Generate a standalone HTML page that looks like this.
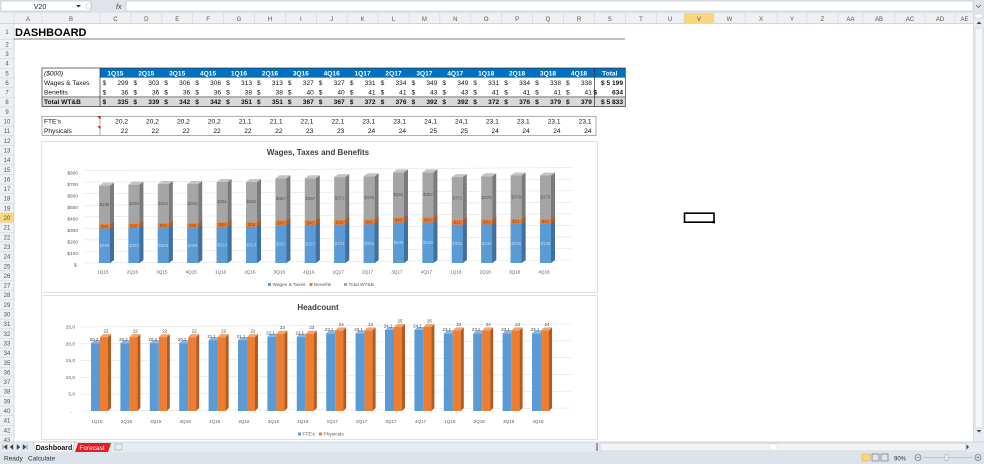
<!DOCTYPE html>
<html><head><meta charset="utf-8"><style>
html,body{margin:0;padding:0;background:#fff;}
svg{display:block;font-family:"Liberation Sans",Arial,sans-serif;}
.h{font-size:6px;fill:#555;text-anchor:middle}
.t{font-size:6.6px;fill:#111}
.b{font-weight:bold}
.e{text-anchor:end}
.m{text-anchor:middle}
.ax{font-size:4.8px;fill:#595959;text-anchor:end}
.cat{font-size:4.6px;fill:#595959;text-anchor:middle}
.lg{font-size:4.8px;fill:#595959}
.gl{font-size:4.4px;text-anchor:middle}
.f{fill:#a5a5a5}.fs{fill:#7b7b7b}.ft{fill:#c4c4c4}
.o{fill:#ed7d31}.os{fill:#b05b22}.ot{fill:#f4a36e}
.u{fill:#5b9bd5}.us{fill:#3f70a0}.ut{fill:#8cb9e3}
</style></head><body>
<svg width="984" height="464" viewBox="0 0 984 464" xmlns="http://www.w3.org/2000/svg">
<defs>
<pattern id="rl" x="0" y="39" width="14" height="9.65" patternUnits="userSpaceOnUse"><rect width="14" height="9.65" fill="#eef0f3"/><line x1="0" y1="0.3" x2="14" y2="0.3" stroke="#d3d7dc" stroke-width="0.6"/></pattern>
</defs>
<!-- formula bar -->
<rect x="0" y="0" width="984" height="13" fill="#dfe4ea"/>
<rect x="1" y="1" width="90" height="10" fill="#fff" stroke="#b9c0c8" stroke-width="0.6"/>
<text x="40" y="9" font-size="7" fill="#222" class="m">V20</text>
<path d="M76 5 l2.5 2.5 l2.5 -2.5z" fill="#333"/>
<circle cx="89" cy="6" r="3" fill="none" stroke="#c4cad0" stroke-width="0.6"/>
<text x="116" y="9" font-size="7" font-style="italic" fill="#444">fx</text>
<rect x="126" y="1" width="847" height="10" fill="#fff" stroke="#b9c0c8" stroke-width="0.6"/>
<path d="M976 5 l2.5 2.5 l2.5 -2.5" stroke="#555" fill="none" stroke-width="0.7"/>
<!-- column header -->
<rect x="0" y="13" width="974" height="11" fill="#eef0f3"/>
<line x1="0" y1="23.7" x2="974" y2="23.7" stroke="#c0c5cc" stroke-width="0.6"/>
<rect x="684" y="13" width="30" height="11" fill="#f8d77c"/>
<g stroke="#d0d4da" stroke-width="0.6">
<line x1="14" y1="13" x2="14" y2="24"/><line x1="42" y1="13" x2="42" y2="24"/><line x1="100" y1="13" x2="100" y2="24"/><line x1="130.9" y1="13" x2="130.9" y2="24"/><line x1="161.8" y1="13" x2="161.8" y2="24"/><line x1="192.7" y1="13" x2="192.7" y2="24"/><line x1="223.6" y1="13" x2="223.6" y2="24"/><line x1="254.5" y1="13" x2="254.5" y2="24"/><line x1="285.4" y1="13" x2="285.4" y2="24"/><line x1="316.3" y1="13" x2="316.3" y2="24"/><line x1="347.2" y1="13" x2="347.2" y2="24"/><line x1="378.1" y1="13" x2="378.1" y2="24"/><line x1="409" y1="13" x2="409" y2="24"/><line x1="439.9" y1="13" x2="439.9" y2="24"/><line x1="470.8" y1="13" x2="470.8" y2="24"/><line x1="501.7" y1="13" x2="501.7" y2="24"/><line x1="532.6" y1="13" x2="532.6" y2="24"/><line x1="563.5" y1="13" x2="563.5" y2="24"/><line x1="594.4" y1="13" x2="594.4" y2="24"/><line x1="625.3" y1="13" x2="625.3" y2="24"/><line x1="656.5" y1="13" x2="656.5" y2="24"/><line x1="684" y1="13" x2="684" y2="24"/><line x1="714" y1="13" x2="714" y2="24"/><line x1="745" y1="13" x2="745" y2="24"/><line x1="777" y1="13" x2="777" y2="24"/><line x1="807" y1="13" x2="807" y2="24"/><line x1="838" y1="13" x2="838" y2="24"/><line x1="863" y1="13" x2="863" y2="24"/><line x1="895" y1="13" x2="895" y2="24"/><line x1="925" y1="13" x2="925" y2="24"/><line x1="955" y1="13" x2="955" y2="24"/>
</g>
<text y="21" class="h"><tspan x="28">A</tspan><tspan x="71">B</tspan><tspan x="115.4">C</tspan><tspan x="146.3">D</tspan><tspan x="177.2">E</tspan><tspan x="208.1">F</tspan><tspan x="239">G</tspan><tspan x="270">H</tspan><tspan x="300.8">I</tspan><tspan x="331.7">J</tspan><tspan x="362.6">K</tspan><tspan x="393.5">L</tspan><tspan x="424.4">M</tspan><tspan x="455.3">N</tspan><tspan x="486.2">O</tspan><tspan x="517.1">P</tspan><tspan x="548">Q</tspan><tspan x="579">R</tspan><tspan x="609.8">S</tspan><tspan x="640.9">T</tspan><tspan x="670.2">U</tspan><tspan x="699">V</tspan><tspan x="729.5">W</tspan><tspan x="761">X</tspan><tspan x="792">Y</tspan><tspan x="822.5">Z</tspan><tspan x="850.5">AA</tspan><tspan x="879">AB</tspan><tspan x="910">AC</tspan><tspan x="940">AD</tspan><tspan x="964.5">AE</tspan></text>
<!-- row header -->
<rect x="0" y="24" width="14" height="418" fill="url(#rl)"/>
<rect x="0" y="24" width="14" height="15" fill="#eef0f3"/>
<rect x="0" y="212.7" width="14" height="9.65" fill="#f8d77c"/>
<line x1="14" y1="24" x2="14" y2="442" stroke="#c0c5cc" stroke-width="0.6"/>
<text class="h" x="7"><tspan y="34">1</tspan><tspan x="7" y="46.3">2</tspan><tspan x="7" y="55.95">3</tspan><tspan x="7" y="65.6">4</tspan><tspan x="7" y="75.25">5</tspan><tspan x="7" y="84.9">6</tspan><tspan x="7" y="94.55">7</tspan><tspan x="7" y="104.2">8</tspan><tspan x="7" y="113.85">9</tspan><tspan x="7" y="123.5">10</tspan><tspan x="7" y="133.15">11</tspan><tspan x="7" y="142.8">12</tspan><tspan x="7" y="152.45">13</tspan><tspan x="7" y="162.1">14</tspan><tspan x="7" y="171.75">15</tspan><tspan x="7" y="181.4">16</tspan><tspan x="7" y="191.05">17</tspan><tspan x="7" y="200.7">18</tspan><tspan x="7" y="210.35">19</tspan><tspan x="7" y="220">20</tspan><tspan x="7" y="229.65">21</tspan><tspan x="7" y="239.3">22</tspan><tspan x="7" y="248.95">23</tspan><tspan x="7" y="258.6">24</tspan><tspan x="7" y="268.25">25</tspan><tspan x="7" y="277.9">26</tspan><tspan x="7" y="287.55">27</tspan><tspan x="7" y="297.2">28</tspan><tspan x="7" y="306.85">29</tspan><tspan x="7" y="316.5">30</tspan><tspan x="7" y="326.15">31</tspan><tspan x="7" y="335.8">32</tspan><tspan x="7" y="345.45">33</tspan><tspan x="7" y="355.1">34</tspan><tspan x="7" y="364.75">35</tspan><tspan x="7" y="374.4">36</tspan><tspan x="7" y="384.05">37</tspan><tspan x="7" y="393.7">38</tspan><tspan x="7" y="403.35">39</tspan><tspan x="7" y="413">40</tspan><tspan x="7" y="422.65">41</tspan><tspan x="7" y="432.3">42</tspan><tspan x="7" y="441.95">43</tspan></text>

<!-- title -->
<text x="15" y="36" font-size="11" font-weight="bold" fill="#000">DASHBOARD</text>
<line x1="14" y1="39" x2="625" y2="39" stroke="#555" stroke-width="0.8"/>

<!-- table -->
<rect x="100" y="68" width="525.3" height="9.65" fill="#0070c0"/>
<rect x="42" y="96.95" width="583.3" height="9.65" fill="#d9d9d9"/>
<rect x="42" y="68" width="583.3" height="38.6" fill="none" stroke="#333" stroke-width="0.7"/>
<line x1="100" y1="68" x2="100" y2="106.6" stroke="#333" stroke-width="0.7"/>
<line x1="594.4" y1="68" x2="594.4" y2="106.6" stroke="#333" stroke-width="0.7"/>
<line x1="42" y1="96.95" x2="625.3" y2="96.95" stroke="#333" stroke-width="0.7"/>
<text y="75.25" class="t" font-style="italic"><tspan x="44">($000)</tspan></text>
<text y="75.25" class="t b m" fill="#fff" style="fill:#fff"><tspan x="115.4">1Q15</tspan><tspan x="146.3">2Q15</tspan><tspan x="177.2">3Q15</tspan><tspan x="208.1">4Q15</tspan><tspan x="239">1Q16</tspan><tspan x="270">2Q16</tspan><tspan x="300.8">3Q16</tspan><tspan x="331.7">4Q16</tspan><tspan x="362.6">1Q17</tspan><tspan x="393.5">2Q17</tspan><tspan x="424.4">3Q17</tspan><tspan x="455.3">4Q17</tspan><tspan x="486.2">1Q18</tspan><tspan x="517.1">2Q18</tspan><tspan x="548">3Q18</tspan><tspan x="579">4Q18</tspan><tspan x="609.8">Total</tspan></text>
<text class="t"><tspan x="44" y="84.9">Wages &amp; Taxes</tspan><tspan x="44" y="94.55">Benefits</tspan><tspan x="44" y="104.2" font-weight="bold">Total WT&amp;B</tspan></text>
<text class="t"><tspan x="102.5" y="84.9">$</tspan><tspan x="133.4">$</tspan><tspan x="164.3">$</tspan><tspan x="195.2">$</tspan><tspan x="226.1">$</tspan><tspan x="257">$</tspan><tspan x="287.9">$</tspan><tspan x="318.8">$</tspan><tspan x="349.7">$</tspan><tspan x="380.6">$</tspan><tspan x="411.5">$</tspan><tspan x="442.4">$</tspan><tspan x="473.3">$</tspan><tspan x="504.2">$</tspan><tspan x="535.1">$</tspan><tspan x="566">$</tspan></text>
<text class="t"><tspan x="102.5" y="94.55">$</tspan><tspan x="133.4">$</tspan><tspan x="164.3">$</tspan><tspan x="195.2">$</tspan><tspan x="226.1">$</tspan><tspan x="257">$</tspan><tspan x="287.9">$</tspan><tspan x="318.8">$</tspan><tspan x="349.7">$</tspan><tspan x="380.6">$</tspan><tspan x="411.5">$</tspan><tspan x="442.4">$</tspan><tspan x="473.3">$</tspan><tspan x="504.2">$</tspan><tspan x="535.1">$</tspan><tspan x="566">$</tspan></text>
<text class="t b"><tspan x="102.5" y="104.2">$</tspan><tspan x="133.4">$</tspan><tspan x="164.3">$</tspan><tspan x="195.2">$</tspan><tspan x="226.1">$</tspan><tspan x="257">$</tspan><tspan x="287.9">$</tspan><tspan x="318.8">$</tspan><tspan x="349.7">$</tspan><tspan x="380.6">$</tspan><tspan x="411.5">$</tspan><tspan x="442.4">$</tspan><tspan x="473.3">$</tspan><tspan x="504.2">$</tspan><tspan x="535.1">$</tspan><tspan x="566">$</tspan></text>
<g class="t e" style="text-anchor:end">
<text y="84.9" class="t e"><tspan x="128.4">299</tspan><tspan x="159.3">303</tspan><tspan x="190.2">306</tspan><tspan x="221.1">306</tspan><tspan x="252">313</tspan><tspan x="282.9">313</tspan><tspan x="313.8">327</tspan><tspan x="344.7">327</tspan><tspan x="375.6">331</tspan><tspan x="406.5">334</tspan><tspan x="437.4">349</tspan><tspan x="468.3">349</tspan><tspan x="499.2">331</tspan><tspan x="530.1">334</tspan><tspan x="561">338</tspan><tspan x="591.9">338</tspan><tspan x="623" font-weight="bold">$ 5 199</tspan></text>
<text y="94.55" class="t e"><tspan x="128.4">36</tspan><tspan x="159.3">36</tspan><tspan x="190.2">36</tspan><tspan x="221.1">36</tspan><tspan x="252">38</tspan><tspan x="282.9">38</tspan><tspan x="313.8">40</tspan><tspan x="344.7">40</tspan><tspan x="375.6">41</tspan><tspan x="406.5">41</tspan><tspan x="437.4">43</tspan><tspan x="468.3">43</tspan><tspan x="499.2">41</tspan><tspan x="530.1">41</tspan><tspan x="561">41</tspan><tspan x="591.9">41</tspan><tspan x="623" font-weight="bold">634</tspan></text>
<text y="94.55" class="t b"><tspan x="597">$</tspan></text>
<text y="104.2" class="t e b"><tspan x="128.4">335</tspan><tspan x="159.3">339</tspan><tspan x="190.2">342</tspan><tspan x="221.1">342</tspan><tspan x="252">351</tspan><tspan x="282.9">351</tspan><tspan x="313.8">367</tspan><tspan x="344.7">367</tspan><tspan x="375.6">372</tspan><tspan x="406.5">376</tspan><tspan x="437.4">392</tspan><tspan x="468.3">392</tspan><tspan x="499.2">372</tspan><tspan x="530.1">376</tspan><tspan x="561">379</tspan><tspan x="591.9">379</tspan><tspan x="623">$ 5 833</tspan></text>
<text y="123.5" class="t e"><tspan x="128">20,2</tspan><tspan x="158.9">20,2</tspan><tspan x="189.8">20,2</tspan><tspan x="220.7">20,2</tspan><tspan x="251.6">21,1</tspan><tspan x="282.5">21,1</tspan><tspan x="313.4">22,1</tspan><tspan x="344.3">22,1</tspan><tspan x="375.2">23,1</tspan><tspan x="406.1">23,1</tspan><tspan x="437">24,1</tspan><tspan x="467.9">24,1</tspan><tspan x="498.8">23,1</tspan><tspan x="529.7">23,1</tspan><tspan x="560.6">23,1</tspan><tspan x="591.5">23,1</tspan></text>
<text y="133.15" class="t e"><tspan x="128">22</tspan><tspan x="158.9">22</tspan><tspan x="189.8">22</tspan><tspan x="220.7">22</tspan><tspan x="251.6">22</tspan><tspan x="282.5">22</tspan><tspan x="313.4">23</tspan><tspan x="344.3">23</tspan><tspan x="375.2">24</tspan><tspan x="406.1">24</tspan><tspan x="437">25</tspan><tspan x="467.9">25</tspan><tspan x="498.8">24</tspan><tspan x="529.7">24</tspan><tspan x="560.6">24</tspan><tspan x="591.5">24</tspan></text>
</g>
<rect x="42" y="116.25" width="554" height="19.3" fill="none" stroke="#777" stroke-width="0.6"/>
<line x1="100" y1="116.25" x2="100" y2="135.55" stroke="#777" stroke-width="0.6"/>
<text class="t"><tspan x="44" y="123.5">FTE's</tspan><tspan x="44" y="133.15">Physicals</tspan></text>
<path d="M97.5 116.5 h3 v3z M97.5 126.2 h3 v3z" fill="#c00000"/>

<!-- chart 1 -->
<rect x="41.5" y="141.5" width="556" height="151" fill="#fff" stroke="#d9d9d9" stroke-width="0.8"/>
<text x="318" y="155" font-size="8" font-weight="bold" fill="#404040" class="m">Wages, Taxes and Benefits</text>
<g stroke="#e3e3e3" stroke-width="0.6">
<line x1="84" y1="170.6" x2="572" y2="167.6"/><line x1="84" y1="182.2" x2="572" y2="179.2"/><line x1="84" y1="193.7" x2="572" y2="190.7"/><line x1="84" y1="205.3" x2="572" y2="202.3"/><line x1="84" y1="216.8" x2="572" y2="213.8"/><line x1="84" y1="228.4" x2="572" y2="225.4"/><line x1="84" y1="239.9" x2="572" y2="236.9"/><line x1="84" y1="251.5" x2="572" y2="248.5"/><line x1="84" y1="263" x2="572" y2="260"/>
</g>
<text class="ax"><tspan x="78" y="174.5">$800</tspan><tspan x="78" y="186">$700</tspan><tspan x="78" y="197.5">$600</tspan><tspan x="78" y="209">$500</tspan><tspan x="78" y="220.5">$400</tspan><tspan x="78" y="232">$300</tspan><tspan x="78" y="243.5">$200</tspan><tspan x="78" y="255">$100</tspan><tspan x="78" y="266.5">$-</tspan></text>

<g transform="translate(99 0)"><rect class="f" y="185.6" width="11" height="77.4"/><polygon class="fs" points="11,185.6 15,182.6 15,260 11,263"/><polygon class="ft" points="0,185.6 4,182.6 15,182.6 11,185.6"/><rect class="o" y="224.3" width="11" height="4.2"/><polygon class="os" points="11,224.3 15,221.3 15,225.5 11,228.5"/><rect class="u" y="228.5" width="11" height="34.5"/><polygon class="us" points="11,228.5 15,225.5 15,260 11,263"/><text class="gl" x="5.5" y="206" fill="#595959">$335</text><text class="gl" x="5.5" y="228" fill="#9c4a14">$36</text><text class="gl" x="5.5" y="247" fill="#bcd6ef">$299</text></g>
<g transform="translate(128.4 0)"><rect class="f" y="184.6" width="11" height="78.4"/><polygon class="fs" points="11,184.6 15,181.6 15,260 11,263"/><polygon class="ft" points="0,184.6 4,181.6 15,181.6 11,184.6"/><rect class="o" y="223.8" width="11" height="4.2"/><polygon class="os" points="11,223.8 15,220.8 15,225 11,228"/><rect class="u" y="228" width="11" height="35"/><polygon class="us" points="11,228 15,225 15,260 11,263"/><text class="gl" x="5.5" y="205" fill="#595959">$339</text><text class="gl" x="5.5" y="227.5" fill="#9c4a14">$36</text><text class="gl" x="5.5" y="247" fill="#bcd6ef">$303</text></g>
<g transform="translate(157.8 0)"><rect class="f" y="184" width="11" height="79"/><polygon class="fs" points="11,184 15,181 15,260 11,263"/><polygon class="ft" points="0,184 4,181 15,181 11,184"/><rect class="o" y="223.5" width="11" height="4.2"/><polygon class="os" points="11,223.5 15,220.5 15,224.7 11,227.7"/><rect class="u" y="227.7" width="11" height="35.3"/><polygon class="us" points="11,227.7 15,224.7 15,260 11,263"/><text class="gl" x="5.5" y="205" fill="#595959">$342</text><text class="gl" x="5.5" y="227" fill="#9c4a14">$36</text><text class="gl" x="5.5" y="247" fill="#bcd6ef">$306</text></g>
<g transform="translate(187.2 0)"><rect class="f" y="184" width="11" height="79"/><polygon class="fs" points="11,184 15,181 15,260 11,263"/><polygon class="ft" points="0,184 4,181 15,181 11,184"/><rect class="o" y="223.5" width="11" height="4.2"/><polygon class="os" points="11,223.5 15,220.5 15,224.7 11,227.7"/><rect class="u" y="227.7" width="11" height="35.3"/><polygon class="us" points="11,227.7 15,224.7 15,260 11,263"/><text class="gl" x="5.5" y="205" fill="#595959">$342</text><text class="gl" x="5.5" y="227" fill="#9c4a14">$36</text><text class="gl" x="5.5" y="247" fill="#bcd6ef">$306</text></g>
<g transform="translate(216.6 0)"><rect class="f" y="182" width="11" height="81"/><polygon class="fs" points="11,182 15,179 15,260 11,263"/><polygon class="ft" points="0,182 4,179 15,179 11,182"/><rect class="o" y="222.5" width="11" height="4.4"/><polygon class="os" points="11,222.5 15,219.5 15,223.9 11,226.9"/><rect class="u" y="226.9" width="11" height="36.1"/><polygon class="us" points="11,226.9 15,223.9 15,260 11,263"/><text class="gl" x="5.5" y="203" fill="#595959">$351</text><text class="gl" x="5.5" y="226" fill="#9c4a14">$38</text><text class="gl" x="5.5" y="246.5" fill="#bcd6ef">$313</text></g>
<g transform="translate(246 0)"><rect class="f" y="182" width="11" height="81"/><polygon class="fs" points="11,182 15,179 15,260 11,263"/><polygon class="ft" points="0,182 4,179 15,179 11,182"/><rect class="o" y="222.5" width="11" height="4.4"/><polygon class="os" points="11,222.5 15,219.5 15,223.9 11,226.9"/><rect class="u" y="226.9" width="11" height="36.1"/><polygon class="us" points="11,226.9 15,223.9 15,260 11,263"/><text class="gl" x="5.5" y="203" fill="#595959">$351</text><text class="gl" x="5.5" y="226" fill="#9c4a14">$38</text><text class="gl" x="5.5" y="246.5" fill="#bcd6ef">$313</text></g>
<g transform="translate(275.4 0)"><rect class="f" y="178.2" width="11" height="84.8"/><polygon class="fs" points="11,178.2 15,175.2 15,260 11,263"/><polygon class="ft" points="0,178.2 4,175.2 15,175.2 11,178.2"/><rect class="o" y="220.6" width="11" height="4.6"/><polygon class="os" points="11,220.6 15,217.6 15,222.2 11,225.2"/><rect class="u" y="225.2" width="11" height="37.8"/><polygon class="us" points="11,225.2 15,222.2 15,260 11,263"/><text class="gl" x="5.5" y="200" fill="#595959">$367</text><text class="gl" x="5.5" y="224.5" fill="#9c4a14">$40</text><text class="gl" x="5.5" y="245.5" fill="#bcd6ef">$327</text></g>
<g transform="translate(304.8 0)"><rect class="f" y="178.2" width="11" height="84.8"/><polygon class="fs" points="11,178.2 15,175.2 15,260 11,263"/><polygon class="ft" points="0,178.2 4,175.2 15,175.2 11,178.2"/><rect class="o" y="220.6" width="11" height="4.6"/><polygon class="os" points="11,220.6 15,217.6 15,222.2 11,225.2"/><rect class="u" y="225.2" width="11" height="37.8"/><polygon class="us" points="11,225.2 15,222.2 15,260 11,263"/><text class="gl" x="5.5" y="200" fill="#595959">$367</text><text class="gl" x="5.5" y="224.5" fill="#9c4a14">$40</text><text class="gl" x="5.5" y="245.5" fill="#bcd6ef">$327</text></g>
<g transform="translate(334.2 0)"><rect class="f" y="177.1" width="11" height="85.9"/><polygon class="fs" points="11,177.1 15,174.1 15,260 11,263"/><polygon class="ft" points="0,177.1 4,174.1 15,174.1 11,177.1"/><rect class="o" y="220.1" width="11" height="4.7"/><polygon class="os" points="11,220.1 15,217.1 15,221.8 11,224.8"/><rect class="u" y="224.8" width="11" height="38.2"/><polygon class="us" points="11,224.8 15,221.8 15,260 11,263"/><text class="gl" x="5.5" y="199.5" fill="#595959">$372</text><text class="gl" x="5.5" y="224" fill="#9c4a14">$41</text><text class="gl" x="5.5" y="245" fill="#bcd6ef">$331</text></g>
<g transform="translate(363.6 0)"><rect class="f" y="176.3" width="11" height="86.7"/><polygon class="fs" points="11,176.3 15,173.3 15,260 11,263"/><polygon class="ft" points="0,176.3 4,173.3 15,173.3 11,176.3"/><rect class="o" y="219.7" width="11" height="4.7"/><polygon class="os" points="11,219.7 15,216.7 15,221.4 11,224.4"/><rect class="u" y="224.4" width="11" height="38.6"/><polygon class="us" points="11,224.4 15,221.4 15,260 11,263"/><text class="gl" x="5.5" y="199" fill="#595959">$376</text><text class="gl" x="5.5" y="223.5" fill="#9c4a14">$41</text><text class="gl" x="5.5" y="245" fill="#bcd6ef">$334</text></g>
<g transform="translate(393 0)"><rect class="f" y="172.4" width="11" height="90.6"/><polygon class="fs" points="11,172.4 15,169.4 15,260 11,263"/><polygon class="ft" points="0,172.4 4,169.4 15,169.4 11,172.4"/><rect class="o" y="217.7" width="11" height="5"/><polygon class="os" points="11,217.7 15,214.7 15,219.7 11,222.7"/><rect class="u" y="222.7" width="11" height="40.3"/><polygon class="us" points="11,222.7 15,219.7 15,260 11,263"/><text class="gl" x="5.5" y="196" fill="#595959">$392</text><text class="gl" x="5.5" y="221.5" fill="#9c4a14">$43</text><text class="gl" x="5.5" y="244" fill="#bcd6ef">$349</text></g>
<g transform="translate(422.4 0)"><rect class="f" y="172.4" width="11" height="90.6"/><polygon class="fs" points="11,172.4 15,169.4 15,260 11,263"/><polygon class="ft" points="0,172.4 4,169.4 15,169.4 11,172.4"/><rect class="o" y="217.7" width="11" height="5"/><polygon class="os" points="11,217.7 15,214.7 15,219.7 11,222.7"/><rect class="u" y="222.7" width="11" height="40.3"/><polygon class="us" points="11,222.7 15,219.7 15,260 11,263"/><text class="gl" x="5.5" y="196" fill="#595959">$392</text><text class="gl" x="5.5" y="221.5" fill="#9c4a14">$43</text><text class="gl" x="5.5" y="244" fill="#bcd6ef">$349</text></g>
<g transform="translate(451.8 0)"><rect class="f" y="177.1" width="11" height="85.9"/><polygon class="fs" points="11,177.1 15,174.1 15,260 11,263"/><polygon class="ft" points="0,177.1 4,174.1 15,174.1 11,177.1"/><rect class="o" y="220.1" width="11" height="4.7"/><polygon class="os" points="11,220.1 15,217.1 15,221.8 11,224.8"/><rect class="u" y="224.8" width="11" height="38.2"/><polygon class="us" points="11,224.8 15,221.8 15,260 11,263"/><text class="gl" x="5.5" y="199.5" fill="#595959">$372</text><text class="gl" x="5.5" y="224" fill="#9c4a14">$41</text><text class="gl" x="5.5" y="245" fill="#bcd6ef">$331</text></g>
<g transform="translate(481.2 0)"><rect class="f" y="176.3" width="11" height="86.7"/><polygon class="fs" points="11,176.3 15,173.3 15,260 11,263"/><polygon class="ft" points="0,176.3 4,173.3 15,173.3 11,176.3"/><rect class="o" y="219.7" width="11" height="4.7"/><polygon class="os" points="11,219.7 15,216.7 15,221.4 11,224.4"/><rect class="u" y="224.4" width="11" height="38.6"/><polygon class="us" points="11,224.4 15,221.4 15,260 11,263"/><text class="gl" x="5.5" y="199" fill="#595959">$376</text><text class="gl" x="5.5" y="223.5" fill="#9c4a14">$41</text><text class="gl" x="5.5" y="245" fill="#bcd6ef">$334</text></g>
<g transform="translate(510.6 0)"><rect class="f" y="175.5" width="11" height="87.5"/><polygon class="fs" points="11,175.5 15,172.5 15,260 11,263"/><polygon class="ft" points="0,175.5 4,172.5 15,172.5 11,175.5"/><rect class="o" y="219.3" width="11" height="4.7"/><polygon class="os" points="11,219.3 15,216.3 15,221 11,224"/><rect class="u" y="224" width="11" height="39"/><polygon class="us" points="11,224 15,221 15,260 11,263"/><text class="gl" x="5.5" y="198.5" fill="#595959">$379</text><text class="gl" x="5.5" y="223" fill="#9c4a14">$41</text><text class="gl" x="5.5" y="245" fill="#bcd6ef">$338</text></g>
<g transform="translate(540 0)"><rect class="f" y="175.5" width="11" height="87.5"/><polygon class="fs" points="11,175.5 15,172.5 15,260 11,263"/><polygon class="ft" points="0,175.5 4,172.5 15,172.5 11,175.5"/><rect class="o" y="219.3" width="11" height="4.7"/><polygon class="os" points="11,219.3 15,216.3 15,221 11,224"/><rect class="u" y="224" width="11" height="39"/><polygon class="us" points="11,224 15,221 15,260 11,263"/><text class="gl" x="5.5" y="198.5" fill="#595959">$379</text><text class="gl" x="5.5" y="223" fill="#9c4a14">$41</text><text class="gl" x="5.5" y="245" fill="#bcd6ef">$338</text></g>

<text class="cat" y="273.5"><tspan x="103">1Q15</tspan><tspan x="132.4">2Q15</tspan><tspan x="161.8">3Q15</tspan><tspan x="191.2">4Q15</tspan><tspan x="220.6">1Q16</tspan><tspan x="250">2Q16</tspan><tspan x="279.4">3Q16</tspan><tspan x="308.8">4Q16</tspan><tspan x="338.2">1Q17</tspan><tspan x="367.6">2Q17</tspan><tspan x="397">3Q17</tspan><tspan x="426.4">4Q17</tspan><tspan x="455.8">1Q18</tspan><tspan x="485.2">2Q18</tspan><tspan x="514.6">3Q18</tspan><tspan x="544">4Q18</tspan></text>
<rect x="268" y="283" width="3" height="3" fill="#5b9bd5"/><rect x="309.5" y="283" width="3" height="3" fill="#ed7d31"/><rect x="344" y="283" width="3" height="3" fill="#a5a5a5"/>
<text class="lg" y="286.2"><tspan x="272.5">Wages &amp; Taxes</tspan><tspan x="314">Benefits</tspan><tspan x="348.5">Total WT&amp;B</tspan></text>

<!-- chart 2 -->
<rect x="41.5" y="295.5" width="556" height="144" fill="#fff" stroke="#d9d9d9" stroke-width="0.8"/>
<text x="318" y="310" font-size="8" font-weight="bold" fill="#404040" class="m">Headcount</text>
<g stroke="#e3e3e3" stroke-width="0.6">
<line x1="80" y1="327" x2="572" y2="324"/><line x1="80" y1="343.8" x2="572" y2="340.8"/><line x1="80" y1="360.6" x2="572" y2="357.6"/><line x1="80" y1="377.4" x2="572" y2="374.4"/><line x1="80" y1="394.2" x2="572" y2="391.2"/><line x1="80" y1="411" x2="572" y2="408"/>
</g>
<text class="ax"><tspan x="75" y="328.5">25,0</tspan><tspan x="75" y="345.3">20,0</tspan><tspan x="75" y="362.1">15,0</tspan><tspan x="75" y="378.9">10,0</tspan><tspan x="75" y="395.7">5,0</tspan><tspan x="72" y="413.5">-</tspan></text>

<g transform="translate(91 0)"><rect class="u" y="343.1" width="9" height="67.9"/><polygon class="ut" points="0,343.1 3,340.1 12,340.1 9,343.1"/><rect class="o" x="9" y="337.1" width="8" height="73.9"/><polygon class="os" points="17,337.1 20,334.1 20,408 17,411"/><polygon class="ot" points="9,337.1 12,334.1 20,334.1 17,337.1"/><text class="gl" x="3" y="341" fill="#404040">20,2</text><text class="gl" x="15" y="332.5" fill="#404040">22</text></g>
<g transform="translate(120.4 0)"><rect class="u" y="343.1" width="9" height="67.9"/><polygon class="ut" points="0,343.1 3,340.1 12,340.1 9,343.1"/><rect class="o" x="9" y="337.1" width="8" height="73.9"/><polygon class="os" points="17,337.1 20,334.1 20,408 17,411"/><polygon class="ot" points="9,337.1 12,334.1 20,334.1 17,337.1"/><text class="gl" x="3" y="341" fill="#404040">20,2</text><text class="gl" x="15" y="332.5" fill="#404040">22</text></g>
<g transform="translate(149.8 0)"><rect class="u" y="343.1" width="9" height="67.9"/><polygon class="ut" points="0,343.1 3,340.1 12,340.1 9,343.1"/><rect class="o" x="9" y="337.1" width="8" height="73.9"/><polygon class="os" points="17,337.1 20,334.1 20,408 17,411"/><polygon class="ot" points="9,337.1 12,334.1 20,334.1 17,337.1"/><text class="gl" x="3" y="341" fill="#404040">20,2</text><text class="gl" x="15" y="332.5" fill="#404040">22</text></g>
<g transform="translate(179.2 0)"><rect class="u" y="343.1" width="9" height="67.9"/><polygon class="ut" points="0,343.1 3,340.1 12,340.1 9,343.1"/><rect class="o" x="9" y="337.1" width="8" height="73.9"/><polygon class="os" points="17,337.1 20,334.1 20,408 17,411"/><polygon class="ot" points="9,337.1 12,334.1 20,334.1 17,337.1"/><text class="gl" x="3" y="341" fill="#404040">20,2</text><text class="gl" x="15" y="332.5" fill="#404040">22</text></g>
<g transform="translate(208.6 0)"><rect class="u" y="340.1" width="9" height="70.9"/><polygon class="ut" points="0,340.1 3,337.1 12,337.1 9,340.1"/><rect class="o" x="9" y="337.1" width="8" height="73.9"/><polygon class="os" points="17,337.1 20,334.1 20,408 17,411"/><polygon class="ot" points="9,337.1 12,334.1 20,334.1 17,337.1"/><text class="gl" x="3" y="338" fill="#404040">21,1</text><text class="gl" x="15" y="332.5" fill="#404040">22</text></g>
<g transform="translate(238 0)"><rect class="u" y="340.1" width="9" height="70.9"/><polygon class="ut" points="0,340.1 3,337.1 12,337.1 9,340.1"/><rect class="o" x="9" y="337.1" width="8" height="73.9"/><polygon class="os" points="17,337.1 20,334.1 20,408 17,411"/><polygon class="ot" points="9,337.1 12,334.1 20,334.1 17,337.1"/><text class="gl" x="3" y="338" fill="#404040">21,1</text><text class="gl" x="15" y="332.5" fill="#404040">22</text></g>
<g transform="translate(267.4 0)"><rect class="u" y="336.7" width="9" height="74.3"/><polygon class="ut" points="0,336.7 3,333.7 12,333.7 9,336.7"/><rect class="o" x="9" y="333.7" width="8" height="77.3"/><polygon class="os" points="17,333.7 20,330.7 20,408 17,411"/><polygon class="ot" points="9,333.7 12,330.7 20,330.7 17,333.7"/><text class="gl" x="3" y="334.5" fill="#404040">22,1</text><text class="gl" x="15" y="329" fill="#404040">23</text></g>
<g transform="translate(296.8 0)"><rect class="u" y="336.7" width="9" height="74.3"/><polygon class="ut" points="0,336.7 3,333.7 12,333.7 9,336.7"/><rect class="o" x="9" y="333.7" width="8" height="77.3"/><polygon class="os" points="17,333.7 20,330.7 20,408 17,411"/><polygon class="ot" points="9,333.7 12,330.7 20,330.7 17,333.7"/><text class="gl" x="3" y="334.5" fill="#404040">22,1</text><text class="gl" x="15" y="329" fill="#404040">23</text></g>
<g transform="translate(326.2 0)"><rect class="u" y="333.4" width="9" height="77.6"/><polygon class="ut" points="0,333.4 3,330.4 12,330.4 9,333.4"/><rect class="o" x="9" y="330.4" width="8" height="80.6"/><polygon class="os" points="17,330.4 20,327.4 20,408 17,411"/><polygon class="ot" points="9,330.4 12,327.4 20,327.4 17,330.4"/><text class="gl" x="3" y="331" fill="#404040">23,1</text><text class="gl" x="15" y="326" fill="#404040">24</text></g>
<g transform="translate(355.6 0)"><rect class="u" y="333.4" width="9" height="77.6"/><polygon class="ut" points="0,333.4 3,330.4 12,330.4 9,333.4"/><rect class="o" x="9" y="330.4" width="8" height="80.6"/><polygon class="os" points="17,330.4 20,327.4 20,408 17,411"/><polygon class="ot" points="9,330.4 12,327.4 20,327.4 17,330.4"/><text class="gl" x="3" y="331" fill="#404040">23,1</text><text class="gl" x="15" y="326" fill="#404040">24</text></g>
<g transform="translate(385 0)"><rect class="u" y="330" width="9" height="81"/><polygon class="ut" points="0,330 3,327 12,327 9,330"/><rect class="o" x="9" y="327" width="8" height="84"/><polygon class="os" points="17,327 20,324 20,408 17,411"/><polygon class="ot" points="9,327 12,324 20,324 17,327"/><text class="gl" x="3" y="327.5" fill="#404040">24,1</text><text class="gl" x="15" y="322.5" fill="#404040">25</text></g>
<g transform="translate(414.4 0)"><rect class="u" y="330" width="9" height="81"/><polygon class="ut" points="0,330 3,327 12,327 9,330"/><rect class="o" x="9" y="327" width="8" height="84"/><polygon class="os" points="17,327 20,324 20,408 17,411"/><polygon class="ot" points="9,327 12,324 20,324 17,327"/><text class="gl" x="3" y="327.5" fill="#404040">24,1</text><text class="gl" x="15" y="322.5" fill="#404040">25</text></g>
<g transform="translate(443.8 0)"><rect class="u" y="333.4" width="9" height="77.6"/><polygon class="ut" points="0,333.4 3,330.4 12,330.4 9,333.4"/><rect class="o" x="9" y="330.4" width="8" height="80.6"/><polygon class="os" points="17,330.4 20,327.4 20,408 17,411"/><polygon class="ot" points="9,330.4 12,327.4 20,327.4 17,330.4"/><text class="gl" x="3" y="331" fill="#404040">23,1</text><text class="gl" x="15" y="326" fill="#404040">24</text></g>
<g transform="translate(473.2 0)"><rect class="u" y="333.4" width="9" height="77.6"/><polygon class="ut" points="0,333.4 3,330.4 12,330.4 9,333.4"/><rect class="o" x="9" y="330.4" width="8" height="80.6"/><polygon class="os" points="17,330.4 20,327.4 20,408 17,411"/><polygon class="ot" points="9,330.4 12,327.4 20,327.4 17,330.4"/><text class="gl" x="3" y="331" fill="#404040">23,1</text><text class="gl" x="15" y="326" fill="#404040">24</text></g>
<g transform="translate(502.6 0)"><rect class="u" y="333.4" width="9" height="77.6"/><polygon class="ut" points="0,333.4 3,330.4 12,330.4 9,333.4"/><rect class="o" x="9" y="330.4" width="8" height="80.6"/><polygon class="os" points="17,330.4 20,327.4 20,408 17,411"/><polygon class="ot" points="9,330.4 12,327.4 20,327.4 17,330.4"/><text class="gl" x="3" y="331" fill="#404040">23,1</text><text class="gl" x="15" y="326" fill="#404040">24</text></g>
<g transform="translate(532 0)"><rect class="u" y="333.4" width="9" height="77.6"/><polygon class="ut" points="0,333.4 3,330.4 12,330.4 9,333.4"/><rect class="o" x="9" y="330.4" width="8" height="80.6"/><polygon class="os" points="17,330.4 20,327.4 20,408 17,411"/><polygon class="ot" points="9,330.4 12,327.4 20,327.4 17,330.4"/><text class="gl" x="3" y="331" fill="#404040">23,1</text><text class="gl" x="15" y="326" fill="#404040">24</text></g>

<text class="cat" y="423"><tspan x="97">1Q15</tspan><tspan x="126.4">2Q15</tspan><tspan x="155.8">3Q15</tspan><tspan x="185.2">4Q15</tspan><tspan x="214.6">1Q16</tspan><tspan x="244">2Q16</tspan><tspan x="273.4">3Q16</tspan><tspan x="302.8">4Q16</tspan><tspan x="332.2">1Q17</tspan><tspan x="361.6">2Q17</tspan><tspan x="391">3Q17</tspan><tspan x="420.4">4Q17</tspan><tspan x="449.8">1Q18</tspan><tspan x="479.2">2Q18</tspan><tspan x="508.6">3Q18</tspan><tspan x="538">4Q18</tspan></text>
<rect x="298" y="432.5" width="3" height="3" fill="#5b9bd5"/><rect x="319" y="432.5" width="3" height="3" fill="#ed7d31"/>
<text class="lg" y="435.7"><tspan x="302.5">FTE's</tspan><tspan x="323.5">Physicals</tspan></text>

<!-- selected cell -->
<rect x="684.5" y="213.2" width="29.5" height="9" fill="none" stroke="#000" stroke-width="1.6"/>
<rect x="712.5" y="220.8" width="2.5" height="2.5" fill="#000"/>

<!-- vertical scrollbar -->
<rect x="973.5" y="13" width="10.5" height="429" fill="#e9edf1"/>
<line x1="973.5" y1="13" x2="973.5" y2="442" stroke="#c9ced4" stroke-width="0.6"/>
<rect x="975" y="14" width="8" height="4" fill="#fff" stroke="#aab" stroke-width="0.4"/>
<path d="M976.5 24 l2.5 -2.5 l2.5 2.5z" fill="#444"/>
<rect x="975" y="28" width="8" height="400" fill="#f4f6f8" stroke="#b8bfc7" stroke-width="0.5"/>
<path d="M976.5 430 l2.5 2.5 l2.5 -2.5z" fill="#444"/>
<!-- tab bar -->
<rect x="0" y="442" width="984" height="10" fill="#e6ebf0"/>
<line x1="0" y1="442" x2="984" y2="442" stroke="#b8c0c8" stroke-width="0.6"/>
<path d="M3 444.5 v5 M4 447 l3 -2.5 v5z M10 447 l3 -2.5 v5z M17 444.5 l3 2.5 l-3 2.5z M23 444.5 l3 2.5 l-3 2.5z M27 444.5 v5" stroke="#444" fill="#444" stroke-width="0.5"/>
<path d="M33 442 h42 l-3 10 h-36z" fill="#fff" stroke="#9aa3ad" stroke-width="0.5"/>
<text x="54" y="450" font-size="7" font-weight="bold" fill="#111" class="m">Dashboard</text>
<path d="M78 443 h33 l-3 9 h-33z" fill="#e81b23"/>
<text x="92" y="450" font-size="6.5" fill="#fff" class="m">Forecast</text>
<rect x="115" y="444" width="7" height="6" fill="#e8edf2" stroke="#999" stroke-width="0.5"/>
<rect x="600" y="443" width="366" height="8" fill="#f1f3f5" stroke="#b8bfc7" stroke-width="0.5"/>
<rect x="596" y="443" width="2" height="8" fill="#999"/>
<rect x="770" y="444" width="7" height="6" fill="#fff" stroke="#ccc" stroke-width="0.4"/>
<path d="M966.5 444.5 l2.5 2.5 l-2.5 2.5z" fill="#444"/>
<!-- status bar -->
<rect x="0" y="452" width="984" height="12" fill="#dce3ea"/>
<text y="460.5" font-size="6.5" fill="#333"><tspan x="4">Ready</tspan><tspan x="28">Calculate</tspan></text>
<rect x="862" y="454" width="8" height="7" fill="#f8d77c" stroke="#d8a93c" stroke-width="0.5"/>
<rect x="872" y="454" width="7" height="7" fill="none" stroke="#666" stroke-width="0.6"/>
<rect x="881" y="454" width="7" height="7" fill="none" stroke="#666" stroke-width="0.6"/>
<text x="894" y="460.5" font-size="6" fill="#333">90%</text>
<circle cx="918" cy="457.5" r="3" fill="none" stroke="#666" stroke-width="0.6"/><line x1="916.5" y1="457.5" x2="919.5" y2="457.5" stroke="#666" stroke-width="0.6"/>
<line x1="923" y1="457.5" x2="973" y2="457.5" stroke="#aab3bd" stroke-width="0.6"/>
<rect x="945" y="454.5" width="3" height="6" fill="#f5f5f5" stroke="#888" stroke-width="0.4"/>
<circle cx="978" cy="457.5" r="3" fill="none" stroke="#666" stroke-width="0.6"/><path d="M976.5 457.5 h3 M978 456 v3" stroke="#666" stroke-width="0.6"/>
</svg>
</body></html>
